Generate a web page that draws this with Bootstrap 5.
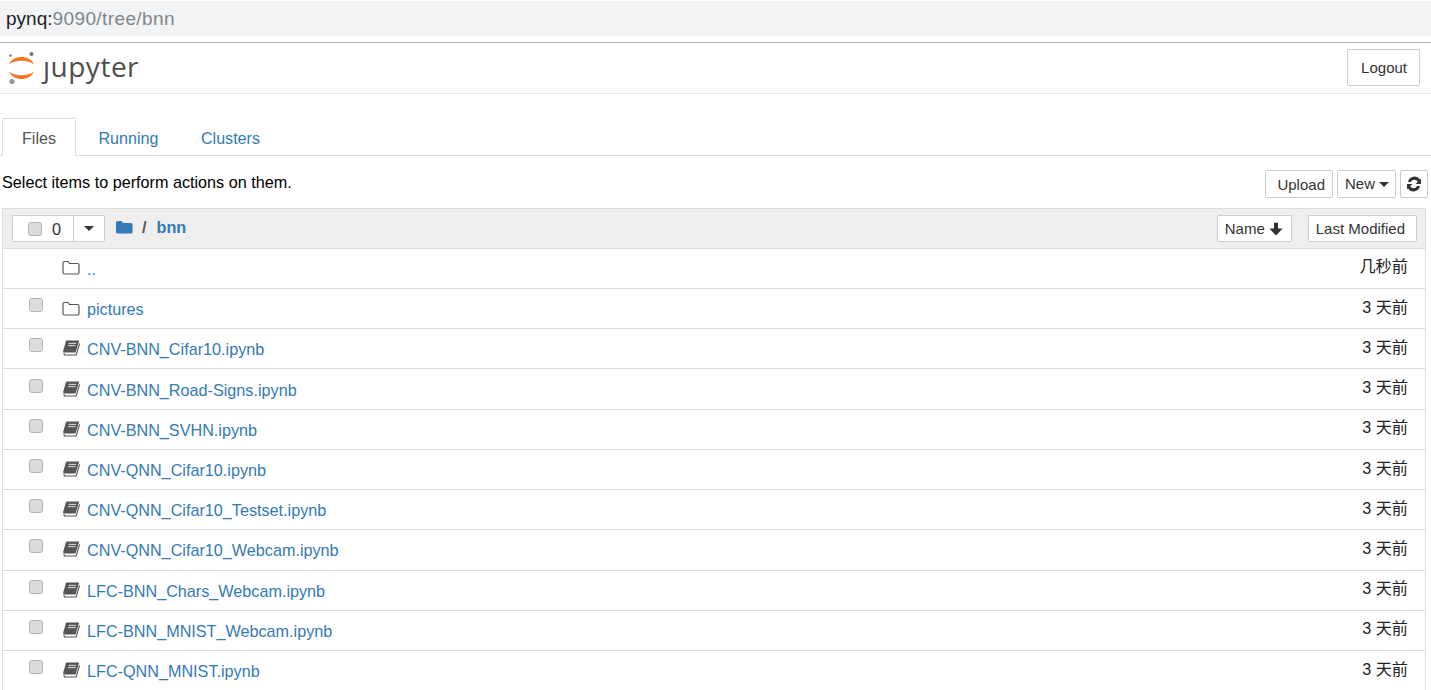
<!DOCTYPE html>
<html lang="en">
<head>
    <meta charset="UTF-8">
    <meta name="viewport" content="width=device-width, initial-scale=1.0">
    <title>bnn/</title>

    <!-- Bootstrap CSS -->
    <link href="https://cdn.jsdelivr.net/npm/bootstrap@5.3.0/dist/css/bootstrap.min.css" rel="stylesheet">

    <style>
        html, body {
            height: 690px;
            overflow: hidden;
        }
        body {
            background: #fff;
            color: #000;
            font: 15px/20px "Liberation Sans", Arial, sans-serif;
        }
        a { text-decoration: none; color: #337ab7; }
        svg { display: block; flex: none; }
        .addr-bar {
            margin-top: 1px;
            height: 35px;
            background: #f1f3f4;
            padding-left: 6px;
            font-size: 19px;
            letter-spacing: .4px;
            line-height: 36px;
            color: #80868b;
        }
        .addr-bar b { font-weight: 400; color: #202124; letter-spacing: 0; }
        .top-head {
            margin-top: 6px;
            height: 52px;
            border-top: 1px solid #b5b5b5;
            border-bottom: 1px solid #e7e7e7;
            padding: 6px 11px 0 8px;
        }
        .logo-word {
            font-family: "Open Sans", sans-serif;
            font-size: 28px;
            line-height: 35px;
            color: #4e4e4e;
            letter-spacing: .5px;
            margin-left: 7px;
        }
        .plain-btn {
            background: #fff;
            border: 1px solid #ccc;
            border-radius: 2px;
            color: #333;
            font-size: 15px;
            line-height: 20px;
            padding: 3px 7px;
            white-space: nowrap;
        }
        .logout-btn { height: 37px; padding: 7px 12px 7px 13px; }
        .new-btn { padding-right: 6px; }
        .file-tabs {
            margin-top: 24px;
            border-bottom: 1px solid #ddd;
            padding-left: 2px;
            height: 38px;
        }
        .file-tabs .nav-link {
            height: 38px;
            padding: 9px 19px 0 19px;
            margin: 0 2.5px 0 0;
            border: 1px solid transparent;
            border-radius: 2px 2px 0 0;
            font-size: 16.1px;
            color: #337ab7;
        }
        .file-tabs .nav-link.active {
            color: #555;
            border-color: #ddd #ddd #fff;
        }
        .tool-row {
            height: 52px;
            padding: 14px 3px 0 2px;
        }
        .tool-note { font-size: 16.2px; line-height: 25px; }
        .upload-btn { padding: 4px 7px 2px 11px; }
        .list-box {
            margin: 0 5px 0 2px;
            border: 1px solid #ddd;
            border-bottom: 0;
            border-radius: 0;
        }
        .list-box .list-group-item {
            height: 40.22px;
            padding: 0 17px 0 0;
            border-width: 0 0 1px;
            border-color: #ddd;
            border-radius: 0;
            font-size: 16.2px;
            color: #333;
        }
        .list-box .list-head {
            height: 39.8px;
            background: #eee;
            padding: 0 8px 0 9px;
            border-bottom: 1px solid #ddd;
        }
        .fake-check {
            display: block;
            width: 14px;
            height: 14px;
            border: 1px solid #b4b4b4;
            border-radius: 3px;
            background: #dcdcdc;
        }
        .select-box {
            height: 27px;
            width: 93px;
            border: 1px solid #ccc;
            background: #fff;
            margin-top: 1px;
            border-radius: 2px;
        }
        .select-num {
            width: 61px;
            border-right: 1px solid #ccc;
            padding-left: 15px;
            gap: 10px;
            color: #333;
        }
        .select-caret { flex: 1; }
        .caret-down {
            display: block;
            width: 0;
            height: 0;
            border-top: 5px solid #333;
            border-left: 5px solid transparent;
            border-right: 5px solid transparent;
        }
        .crumbs { font-size: 16.2px; font-weight: 700; margin: 0 0 3px 11px; }
        .crumbs span { color: #555; margin: 0 10px 0 9px; font-weight: 700; }
        .sort-btn { height: 27px; padding: 2px 8px 2px 7px; margin-top: 1px; }
        .sort-btn.wide-pad { padding-right: 11px; }
        .check-cell { width: 59px; padding: 0 0 7px 26px; }
        .icon-cell { width: 25px; margin-bottom: 1px; }
        .file-link { margin-top: 1px; }
        .when { font-family: "Liberation Sans", "Noto Sans CJK SC", sans-serif; font-size: 16.2px; margin-bottom: 4px; color: #222; }
    </style>
</head>
<body>

<!-- Address bar -->
<div class="addr-bar"><b>pynq:</b>9090/tree/bnn</div>

<!-- Header -->
<div class="top-head d-flex justify-content-between">
    <div class="d-flex">
        <svg width="28" height="38" viewBox="0 0 28 38">
            <path d="M1 15.5C4 5.5 23 5.5 26 15.5C20 10.5 7 10.5 1 15.5Z" fill="#f37726"/>
            <path d="M1 22.5C5 32.5 22 32.5 26 22.5C20 27.5 7 27.5 1 22.5Z" fill="#f37726"/>
            <circle cx="23.5" cy="5" r="2" fill="#767677"/>
            <circle cx="2.5" cy="6.5" r="1.2" fill="#767677"/>
            <circle cx="4" cy="32.5" r="2.6" fill="#989798"/>
        </svg>
        <span class="logo-word">&#567;upyter</span>
    </div>
    <button class="plain-btn logout-btn" type="button">Logout</button>
</div>

<!-- Tabs -->
<ul class="nav nav-tabs file-tabs">
    <li class="nav-item"><a class="nav-link active" href="#">Files</a></li>
    <li class="nav-item"><a class="nav-link" href="#">Running</a></li>
    <li class="nav-item"><a class="nav-link" href="#">Clusters</a></li>
</ul>

<!-- Toolbar -->
<div class="tool-row d-flex justify-content-between">
    <span class="tool-note">Select items to perform actions on them.</span>
    <div class="d-flex gap-1 align-items-start">
        <button class="plain-btn upload-btn" type="button">Upload</button>
        <button class="plain-btn new-btn d-flex align-items-center gap-1" type="button">New <i class="caret-down"></i></button>
        <button class="plain-btn px-1" type="button">
            <svg width="18" height="20" viewBox="0 0 18 20"><path d="M15 5.6A6.6 6.6 0 0 0 3 8H5.8A4 4 0 0 1 12.8 7.8L10.6 10H16V4.4ZM3 14.4A6.6 6.6 0 0 0 15 12H12.2A4 4 0 0 1 5.2 12.2L7.4 10H2V15.6Z" fill="#333"/></svg>
        </button>
    </div>
</div>

<!-- File list -->
<ul class="list-group list-box" id="fileList">
    <li class="list-group-item list-head d-flex align-items-center">
        <div class="select-box d-flex">
            <div class="select-num d-flex align-items-center"><i class="fake-check"></i>0</div>
            <div class="select-caret d-flex align-items-center justify-content-center"><i class="caret-down"></i></div>
        </div>
        <div class="crumbs d-flex align-items-center">
            <svg width="17" height="14" viewBox="0 0 17 14"><path d="M0 2.5Q0 1 1.5 1H5.5L7 3H15Q16.5 3 16.5 4.5V12Q16.5 13.5 15 13.5H1.5Q0 13.5 0 12Z" fill="#337ab7"/></svg>
            <span>/</span><a href="#">bnn</a>
        </div>
        <div class="ms-auto d-flex gap-3">
            <button class="plain-btn sort-btn d-flex align-items-center gap-1" type="button">Name
                <svg width="14" height="14" viewBox="0 0 14 14"><path d="M5 .8H9V6.6H13.6L7 13.6L.4 6.6H5Z" fill="#333"/></svg>
            </button>
            <button class="plain-btn sort-btn wide-pad" type="button">Last Modified</button>
        </div>
    </li>
</ul>

<!-- Bootstrap JS -->
<script src="https://cdn.jsdelivr.net/npm/bootstrap@5.3.0/dist/js/bootstrap.bundle.min.js"></script>

<script>
    const folderIcon = '<svg width="18" height="15" viewBox="0 0 18 15"><path d="M1 3Q1 1.5 2.5 1.5H6L7.5 3.5H15.5Q17 3.5 17 5V12.5Q17 14 15.5 14H2.5Q1 14 1 12.5Z" fill="none" stroke="#555" stroke-width="1.2"/></svg>';
    const bookIcon = '<svg width="18" height="16" viewBox="0 0 18 16"><path d="M4.2 .5H17.2L13.6 12.6H2.6Q.8 12.6 1.2 10.4Z" fill="#555"/><path d="M2.2 12.8Q1.6 15 3.4 15H14.2L17.6 3.4" fill="none" stroke="#555" stroke-width="1.1"/><path d="M6.6 3.4H14.2M6 5.6H13.6" stroke="#ddd" stroke-width="1"/></svg>';

    const files = [
        ["..", folderIcon, "几秒前", false],
        ["pictures", folderIcon, "3 天前", true],
        ["CNV-BNN_Cifar10.ipynb", bookIcon, "3 天前", true],
        ["CNV-BNN_Road-Signs.ipynb", bookIcon, "3 天前", true],
        ["CNV-BNN_SVHN.ipynb", bookIcon, "3 天前", true],
        ["CNV-QNN_Cifar10.ipynb", bookIcon, "3 天前", true],
        ["CNV-QNN_Cifar10_Testset.ipynb", bookIcon, "3 天前", true],
        ["CNV-QNN_Cifar10_Webcam.ipynb", bookIcon, "3 天前", true],
        ["LFC-BNN_Chars_Webcam.ipynb", bookIcon, "3 天前", true],
        ["LFC-BNN_MNIST_Webcam.ipynb", bookIcon, "3 天前", true],
        ["LFC-QNN_MNIST.ipynb", bookIcon, "3 天前", true]
    ];

    let rows = "";
    files.forEach(f => {
        rows += '<li class="list-group-item d-flex align-items-center">'
            + '<div class="check-cell">' + (f[3] ? '<i class="fake-check"></i>' : '') + '</div>'
            + '<div class="icon-cell">' + f[1] + '</div>'
            + '<a class="file-link" href="#">' + f[0] + '</a>'
            + '<span class="when ms-auto">' + f[2] + '</span>'
            + '</li>';
    });
    document.getElementById("fileList").insertAdjacentHTML("beforeend", rows);
</script>

</body>
</html>
